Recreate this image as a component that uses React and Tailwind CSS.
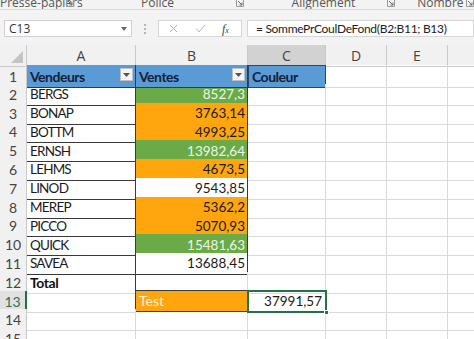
import React from "react";

const rows = [
  { n: 1, a: "Vendeurs", b: "Ventes", c: "Couleur", head: true },
  { n: 2, a: "BERGS", b: "8527,3", fill: "green" },
  { n: 3, a: "BONAP", b: "3763,14", fill: "orange" },
  { n: 4, a: "BOTTM", b: "4993,25", fill: "orange" },
  { n: 5, a: "ERNSH", b: "13982,64", fill: "green" },
  { n: 6, a: "LEHMS", b: "4673,5", fill: "orange" },
  { n: 7, a: "LINOD", b: "9543,85" },
  { n: 8, a: "MEREP", b: "5362,2", fill: "orange" },
  { n: 9, a: "PICCO", b: "5070,93", fill: "orange" },
  { n: 10, a: "QUICK", b: "15481,63", fill: "green" },
  { n: 11, a: "SAVEA", b: "13688,45" },
];

function Launcher() {
  return (
    <svg width="8" height="8" viewBox="0 0 8 8" className="shrink-0">
      <path d="M0.5 0.5h7v7h-7z" fill="none" stroke="#9a9a9a" strokeWidth="1" />
      <path d="M2 2l4 4M6 3.5V6H3.5" fill="none" stroke="#6a6a6a" strokeWidth="1" />
    </svg>
  );
}

function Drop() {
  return (
    <div className="absolute right-[2px] top-[3px] w-[13px] h-[13px] bg-[#f4f4f4] border border-[#bfbfbf] flex items-center justify-center">
      <svg width="7" height="4" viewBox="0 0 7 4">
        <path d="M0 0h7L3.5 4z" fill="#555" />
      </svg>
    </div>
  );
}

function Cell({ className = "", children }) {
  return <div className={"h-full flex items-center " + className}>{children}</div>;
}

export default function App() {
  const grid = "grid grid-cols-[27px_109px_112px_78px_61px_61px_1fr]";
  const gl = "border-r border-b border-[#dadada]";
  const rh = "border-r border-b border-[#c9c9c9] bg-[#f1f1f1] justify-center text-[#444] text-[14px]";
  const hd = "bg-[#5b9bd5] font-bold text-[#10213a] pl-[3px] text-[14px] tracking-[-0.5px]";
  return (
    <div className="w-[474px] h-[339px] overflow-hidden bg-white font-['Lato',sans-serif] text-[#111]">
      {/* ribbon group labels */}
      <div className="h-[10px] overflow-hidden bg-[#f3f3f3] border-b border-[#dcdcdc] text-[12px] text-[#555] font-['Open_Sans',sans-serif]">
        <div className="flex items-center mt-[-6px] h-[17px]">
          <span className="w-[66px] whitespace-nowrap">Presse-papiers</span>
          <Launcher />
          <span className="ml-[67px] w-[95px]">Police</span>
          <Launcher />
          <span className="ml-[48px] w-[96px]">Alignement</span>
          <Launcher />
          <span className="ml-[22px] w-[49px]">Nombre</span>
          <Launcher />
        </div>
      </div>

      {/* formula bar */}
      <div className="h-[35px] bg-[#f3f3f3] flex items-start pt-[10px]">
        <div className="ml-[4px] w-[128px] h-[17px] bg-white border border-[#d0d0d0] flex items-center justify-between pl-[4px] pr-[4px] text-[12px] text-[#333] font-['Open_Sans',sans-serif]">
          <span>C13</span>
          <svg width="6" height="4" viewBox="0 0 6 4">
            <path d="M0 0h6L3 4z" fill="#666" />
          </svg>
        </div>
        <div className="w-[26px] h-[17px] flex flex-col items-center justify-center gap-[2px]">
          <div className="w-[2px] h-[2px] bg-[#b5b5b5]" />
          <div className="w-[2px] h-[2px] bg-[#b5b5b5]" />
          <div className="w-[2px] h-[2px] bg-[#b5b5b5]" />
        </div>
        <div className="w-[84px] h-[17px] bg-white border border-[#d6d6d6] flex items-center">
          <svg width="9" height="9" viewBox="0 0 9 9" className="ml-[10px]">
            <path d="M1 1l7 7M8 1l-7 7" stroke="#b0b0b0" strokeWidth="1" />
          </svg>
          <svg width="11" height="9" viewBox="0 0 11 9" className="ml-[17px]">
            <path d="M1 4.5l3 3.5 6-7" stroke="#b8b8b8" strokeWidth="1" fill="none" />
          </svg>
          <span className="ml-[16px] italic font-['Liberation_Serif',serif] text-[12px] text-[#444]">
            f<span className="text-[8px]">x</span>
          </span>
        </div>
        <div className="ml-[5px] flex-1 h-[17px] bg-white border border-[#d6d6d6] flex items-center pl-[8px] text-[12px] tracking-[-0.3px] text-[#222] whitespace-nowrap">
          = SommePrCoulDeFond(B2:B11; B13)
        </div>
      </div>

      {/* column headers */}
      <div className={grid + " h-[20px] bg-[#f1f1f1] text-[14px] text-[#444] font-['Open_Sans',sans-serif]"}>
        <div className="border-r border-b border-[#c9c9c9] relative">
          <svg width="12" height="12" viewBox="0 0 12 12" className="absolute right-[3px] bottom-[3px]">
            <path d="M12 0V12H0z" fill="#c4c4c4" />
          </svg>
        </div>
        <Cell className="justify-center border-r border-b border-[#c9c9c9]">A</Cell>
        <Cell className="justify-center border-r border-b border-[#c9c9c9]">B</Cell>
        <Cell className="justify-center border-r border-b border-[#c9c9c9] bg-[#d2d2d2]">C</Cell>
        <Cell className="justify-center border-r border-b border-[#c9c9c9]">D</Cell>
        <Cell className="justify-center border-r border-b border-[#c9c9c9]">E</Cell>
        <Cell className="border-b border-[#c9c9c9]" />
      </div>

      {/* data rows */}
      <div className="text-[13.5px]">
        {rows.map((r) => {
          const bFill =
            r.fill === "green"
              ? "bg-[#6aaa47] text-[#eef7e6]"
              : r.fill === "orange"
              ? "bg-[#ffa50e] text-[#1a1a1a]"
              : "bg-white text-[#1a1a1a]";
          return (
            <div key={r.n} className={grid + " h-[18.8px]"}>
              <Cell className={rh}>{r.n}</Cell>
              {r.head ? (
                <>
                  <Cell className={"relative border-r border-b border-[#3a3a3a] " + hd}>
                    {r.a}
                    <Drop />
                  </Cell>
                  <Cell className={"relative border-r border-b border-[#3a3a3a] " + hd}>
                    {r.b}
                    <Drop />
                  </Cell>
                  <Cell className={"border border-[#2c4560] " + hd}>{r.c}</Cell>
                </>
              ) : (
                <>
                  <Cell className="pl-[3px] text-[13.5px] tracking-[-0.8px] border-r border-b border-[#3a3a3a] text-[#1a1a1a]">{r.a}</Cell>
                  <Cell className={"justify-end pr-[2px] border-r border-b border-[#3a3a3a] " + bFill}>{r.b}</Cell>
                  <Cell className={gl} />
                </>
              )}
              <Cell className={gl} />
              <Cell className={gl} />
              <Cell className="border-b border-[#dadada]" />
            </div>
          );
        })}

        {/* row 12 */}
        <div className={grid + " h-[18.8px]"}>
          <Cell className={rh}>12</Cell>
          <Cell className="pl-[3px] text-[14px] tracking-[-0.4px] font-bold text-[#111] border-b border-[#dadada]">Total</Cell>
          <Cell className="border-l border-[#3a3a3a] ml-[-1px] border-r border-r-[#dadada] border-b border-b-[#dadada]" />
          <Cell className={gl} />
          <Cell className={gl} />
          <Cell className={gl} />
          <Cell className="border-b border-[#dadada]" />
        </div>

        {/* row 13 */}
        <div className={grid + " h-[18.8px]"}>
          <Cell className="border-r-2 border-r-[#217346] border-b border-[#c9c9c9] bg-[#e1e1e1] justify-center text-[#3c6b4f] text-[14px]">13</Cell>
          <Cell className={gl} />
          <Cell className="pl-[3px] text-[14px] bg-[#ffa50e] text-[#fff6e0] border border-[#3a3a3a] ml-[-1px] mt-[-1px] h-[19.8px]">Test</Cell>
          <Cell className="relative justify-end pr-[4px] text-[#1a1a1a] border-b border-[#dadada]">
            37991,57
            <div className="absolute inset-[-1px] border-2 border-[#217346] pointer-events-none" />
            <div className="absolute right-[-3px] bottom-[-3px] w-[5px] h-[5px] bg-[#217346] border border-white" />
          </Cell>
          <Cell className={gl} />
          <Cell className={gl} />
          <Cell className="border-b border-[#dadada]" />
        </div>

        {[14, 15].map((n) => (
          <div key={n} className={grid + " h-[18.8px]"}>
            <Cell className={rh}>{n}</Cell>
            <Cell className={gl} />
            <Cell className={gl} />
            <Cell className={gl} />
            <Cell className={gl} />
            <Cell className={gl} />
            <Cell className="border-b border-[#dadada]" />
          </div>
        ))}
      </div>
    </div>
  );
}
